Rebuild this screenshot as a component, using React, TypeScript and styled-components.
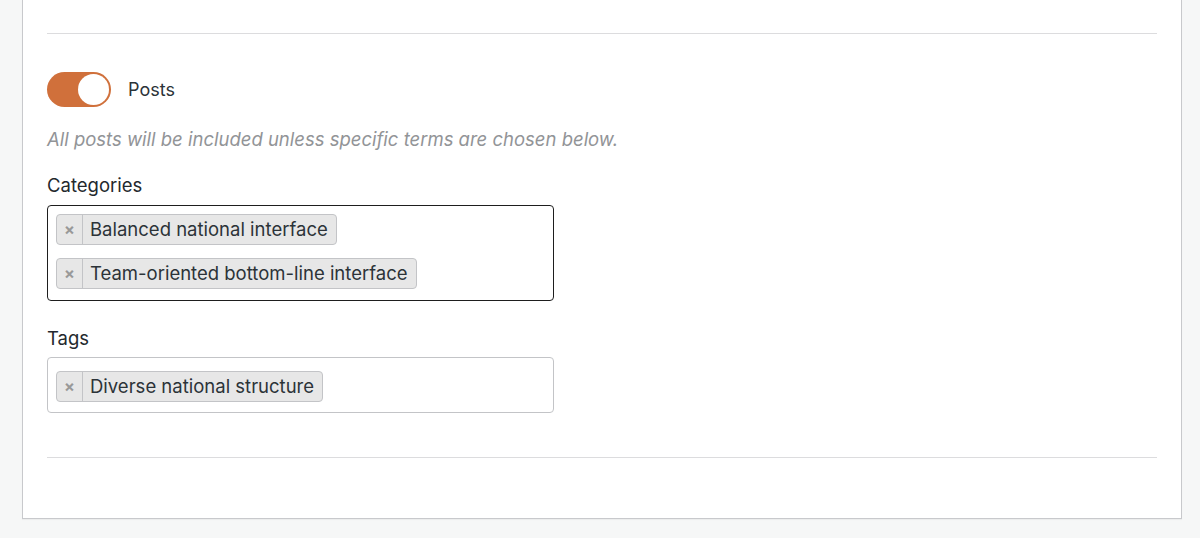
import { useState } from "react";
import styled, { createGlobalStyle } from "styled-components";

const GlobalStyle = createGlobalStyle`
  html, body {
    margin: 0;
    padding: 0;
    background: #f6f7f7;
  }
  body {
    font-family: Inter, "Noto Sans", "Liberation Sans", sans-serif;
    color: #2c3338;
  }
`;

const Page = styled.div`
  padding: 0 18px 19px 22px;
`;

const Card = styled.div`
  background: #ffffff;
  border: 1px solid #c8c9cc;
  border-top: none;
  padding: 33px 24px 60px;
  box-shadow: 0 1px 1px rgba(0, 0, 0, 0.04);
`;

const Rule = styled.hr`
  margin: 0;
  border: none;
  border-top: 1px solid #dcdcde;
  height: 0;
`;

const Section = styled.div`
  padding: 38px 0 44px;
`;

const ToggleRow = styled.label`
  display: flex;
  align-items: center;
  gap: 17px;
  font-size: 18px;
  color: #2c3338;
  cursor: pointer;
`;

const Track = styled.span<{ $on: boolean }>`
  position: relative;
  display: inline-block;
  width: 64px;
  height: 35px;
  border-radius: 18px;
  background: ${(p) => (p.$on ? "#d0703b" : "#c3c4c7")};
  flex-shrink: 0;
`;

const Knob = styled.span<{ $on: boolean }>`
  position: absolute;
  top: 2px;
  left: ${(p) => (p.$on ? "31px" : "2px")};
  width: 31px;
  height: 31px;
  border-radius: 50%;
  background: #ffffff;
`;

const Help = styled.p`
  margin: 20px 0 0;
  font-size: 18.5px;
  line-height: 24px;
  font-style: italic;
  color: #929497;
`;

const FieldLabel = styled.div<{ $gap: number }>`
  margin-top: ${(p) => p.$gap}px;
  font-size: 18.5px;
  line-height: 24px;
  color: #23282d;
`;

const TokenBox = styled.div<{ $focused?: boolean }>`
  box-sizing: border-box;
  width: 507px;
  display: flex;
  flex-direction: column;
  align-items: flex-start;
  gap: 13px;
  margin-top: ${(p) => (p.$focused ? "8px" : "7px")};
  padding: ${(p) => (p.$focused ? "7.5px 8px 11px" : "13px 8px 10px")};
  border: ${(p) => (p.$focused ? "1.5px solid #1e1e1e" : "1px solid #c3c4c7")};
  border-radius: 4px;
  background: #ffffff;
`;

const Chip = styled.span`
  display: inline-flex;
  align-items: stretch;
  height: 31px;
  box-sizing: border-box;
  border: 1px solid #c3c4c7;
  border-radius: 4px;
  background: #e7e7e7;
  font-size: 18.5px;
  color: #2c3338;
`;

const ChipRemove = styled.span`
  display: flex;
  align-items: center;
  justify-content: center;
  width: 25px;
  border-right: 1px solid #c3c4c7;
  color: #999999;
  font-size: 16px;
  font-weight: 700;
`;

const ChipText = styled.span`
  display: flex;
  align-items: center;
  padding: 0 8px 0 7px;
`;

const Field = ({
  label,
  items,
  gap,
  focused,
}: {
  label: string;
  items: string[];
  gap: number;
  focused?: boolean;
}) => (
  <>
    <FieldLabel $gap={gap}>{label}</FieldLabel>
    <TokenBox $focused={focused}>
      {items.map((item) => (
        <Chip key={item}>
          <ChipRemove>×</ChipRemove>
          <ChipText>{item}</ChipText>
        </Chip>
      ))}
    </TokenBox>
  </>
);

export default function App() {
  const [on, setOn] = useState(true);

  return (
    <Page>
      <GlobalStyle />
      <Card>
        <Rule />
        <Section>
          <ToggleRow onClick={() => setOn(!on)}>
            <Track $on={on}>
              <Knob $on={on} />
            </Track>
            Posts
          </ToggleRow>
          <Help>All posts will be included unless specific terms are chosen below.</Help>
          <Field
            label="Categories"
            gap={22}
            focused
            items={["Balanced national interface", "Team-oriented bottom-line interface"]}
          />
          <Field label="Tags" gap={25} items={["Diverse national structure"]} />
        </Section>
        <Rule />
      </Card>
    </Page>
  );
}
